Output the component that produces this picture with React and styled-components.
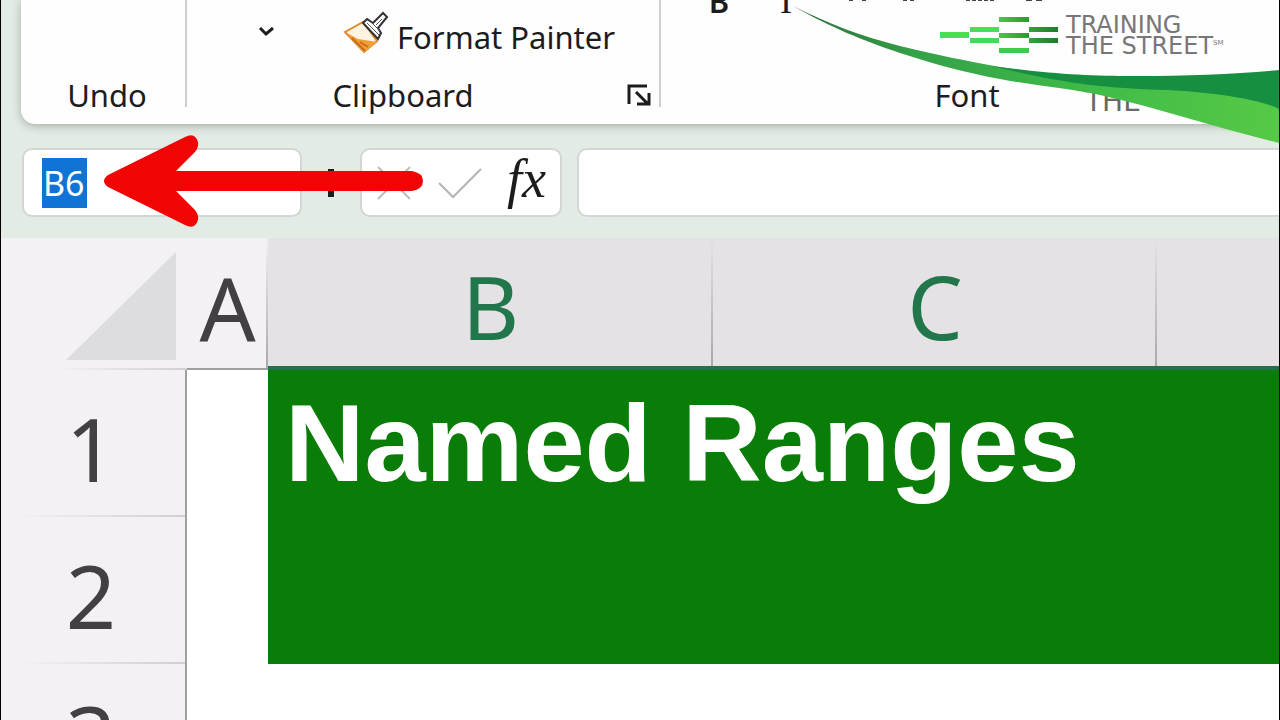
import styled, { createGlobalStyle } from "styled-components";
import { useState } from "react";


const GlobalStyle = createGlobalStyle`
  * {
    box-sizing: border-box;
  }
  body {
    margin: 0;
    font-family: "Noto Sans", "Open Sans", sans-serif;
    color: #1c1c1e;
  }
  button, input {
    font: inherit;
    color: inherit;
    border: 0;
    padding: 0;
    background: none;
  }
`

const Page = styled.div`
  position: relative;
  display: flex;
  flex-direction: column;
  height: 100vh;
  overflow: hidden;
  background: #e2ebe4;
  border-left: 1px solid #000;
  border-right: 1px solid #000;
`

/* ---- ribbon ---- */

const Ribbon = styled.header`
  display: flex;
  flex: none;
  height: 124px;
  margin-left: 20px;
  padding-bottom: 17px;
  background: #fefefe;
  border-radius: 0 0 0 14px;
  box-shadow: 0 2px 8px rgba(90, 100, 90, 0.45);
`

const Group = styled.section`
  display: flex;
  flex: none;
  flex-direction: column;
  width: ${(p) => p.$width}px;
  padding: 0 8px 0 ${(p) => p.$inset}px;
  border-right: ${(p) => (p.$last ? "0" : "2px solid #cfcfd1")};
`

const GroupFooter = styled.div`
  display: flex;
  align-items: center;
  gap: 16px;
  margin-top: auto;
`

const GroupLabel = styled.span`
  flex: 1;
  font-size: 31px;
  line-height: 24px;
  text-align: center;
`

const LauncherButton = styled.button`
  display: flex;
`

const ClipboardTools = styled.div`
  display: flex;
  align-items: center;
  gap: 69px;
  height: 24px;
  margin-top: 25px;
  padding-left: 64px;
`

const PainterButton = styled.button`
  display: flex;
  align-items: center;
  gap: 8px;
  font-size: 31px;
  line-height: 24px;
  white-space: nowrap;
`

const FontTools = styled.div`
  display: flex;
  align-items: flex-end;
  gap: 43px;
  height: 15px;
  padding-left: 38px;
  overflow: hidden;
`

const StyleButton = styled.button`
  width: 24px;
  font-family: ${(p) => (p.$serif ? '"Liberation Serif", serif' : "inherit")};
  font-size: ${(p) => (p.$serif ? 36 : 31)}px;
  font-weight: ${(p) => (p.$serif ? 400 : 600)};
  line-height: 28px;
`

/* ---- formula bar ---- */

const FormulaBar = styled.div`
  position: relative;
  display: flex;
  flex: none;
  padding: 24px 0 21px 21px;
`

const Field = styled.div`
  display: flex;
  align-items: center;
  flex: ${(p) => (p.$width ? `0 0 ${p.$width}px` : "1")};
  height: 69px;
  padding: 0 ${(p) => p.$pad}px;
  background: #fff;
  border: 2px solid #d3d6d4;
  border-right-width: ${(p) => (p.$width ? "2px" : "0")};
  border-radius: ${(p) => (p.$width ? "10px" : "10px 0 0 10px")};
`

const NameInput = styled.input`
  width: 45px;
  height: 50px;
  padding-left: 1px;
  background: #1073d6;
  color: #fff;
  font-size: 34px;
  outline: none;
`

const FormulaInput = styled.input`
  width: 100%;
  height: 48px;
  font-size: 34px;
  outline: none;
`

const Handle = styled.div`
  display: flex;
  justify-content: center;
  align-items: center;
  width: 58px;
`

const FormulaActions = styled(Field)`
  justify-content: space-between;
  margin-right: 15px;
`

const IconButton = styled.button`
  display: flex;
`

const FxButton = styled.button`
  padding-bottom: 8px;
  font-family: "Liberation Serif", serif;
  font-size: 54px;
  font-style: italic;
  line-height: 56px;
`

const Arrow = styled.svg`
  position: absolute;
  left: 102px;
  top: 10px;
`

/* ---- grid ---- */

const Sheet = styled.table`
  flex: none;
  width: 100%;
  table-layout: fixed;
  border-collapse: separate;
  border-spacing: 0;
  background: #fff;
`

const Corner = styled.th`
  width: 186px;
  height: 132px;
  padding: 4px 11px 0 0;
  background: linear-gradient(to right, transparent 30%, #d0cfd2) bottom / 100% 2px no-repeat, #f3f1f4;
  line-height: 0;
  text-align: right;
`

const ColumnHead = styled.th`
  width: ${(p) => (p.$width ? `${p.$width}px` : "auto")};
  padding: 8px 0 0;
  background:
    linear-gradient(to bottom, transparent, #a9a8ab) right / ${(p) => (p.$width ? "2px" : "0")} 100% no-repeat,
    ${(p) => (p.$selected ? "#e4e2e4" : "#f3f1f4")};
  border-bottom: ${(p) => (p.$selected ? "4px solid #23704a" : "2px solid #a09fa2")};
  color: ${(p) => (p.$selected ? "#21764b" : "#424045")};
  font-size: 88px;
  font-weight: 400;
  line-height: 88px;
`

const RowHead = styled.th`
  height: ${(p) => (p.$short ? 135 : 147)}px;
  padding: 8px 4px 0 0;
  background: linear-gradient(to right, transparent 10%, #cfced1) bottom / 100% 2px no-repeat, #f3f1f4;
  border-right: 2px solid #a09fa2;
  color: #424045;
  font-size: 88px;
  font-weight: 400;
  line-height: 88px;
`

const Cell = styled.td`
  padding: 0;
`

const TitleCell = styled.td`
  padding: 17px 0 0 17px;
  background: #0a7d08;
  color: #fff;
  font-family: "Liberation Sans", Arial, sans-serif;
  font-size: 110px;
  font-weight: 700;
  line-height: 112px;
  vertical-align: top;
  white-space: nowrap;
`

/* ---- brand corner ---- */

const Brand = styled.div`
  position: absolute;
  top: 0;
  right: 0;
  width: 492px;
  height: 145px;
`

const Wave = styled.svg`
  position: absolute;
  inset: 0;
`

const BrandRow = styled.div`
  position: relative;
  display: flex;
  gap: 7px;
  padding: 15px 0 0 153px;
`

const BrandName = styled.div`
  color: #77777a;
  font-family: "DejaVu Sans", sans-serif;
  font-size: 24px;
  line-height: 21px;
  white-space: nowrap;
`

const ServiceMark = styled.sup`
  font-size: 7px;
  line-height: 7px;
`

const BrandEcho = styled.span`
  position: absolute;
  left: 298px;
  top: 88px;
  color: #68686b;
  font-family: "DejaVu Sans", sans-serif;
  font-size: 28px;
  line-height: 28px;
`


function PainterIcon() {
  return (
    <svg width="46" height="52" viewBox="0 0 46 52" aria-hidden="true">
      <path d="M2 21 L20 11 L34 30 L21 41 Z" fill="#fff4e2" stroke="#e0892a" strokeWidth="2" />
      <path d="M4 22 L15 28 L34 31 L21 42 Z" fill="#ee9f3a" />
      <path d="M9 27 L22 40 M17 31 L25 36" stroke="#c96d17" strokeWidth="2" />
      <path d="M20 12 L24 8 L30 12 L40 2 L44 6 L35 17 L38 22 L35 28 Z" fill="#fff" stroke="#303036" strokeWidth="2" />
      <path d="M24 12 L36 24 M28 11 L37 20 M33 14 L39 8" stroke="#55555c" strokeWidth="1" />
    </svg>
  )
}

function BrandWave() {
  return (
    <Wave width="492" height="145" viewBox="0 0 492 145" aria-hidden="true">
      <defs>
        <linearGradient id="wave" x1="0" x2="1">
          <stop offset="0" stopColor="#2b6b3a" />
          <stop offset="0.25" stopColor="#34a147" />
          <stop offset="0.65" stopColor="#42bd48" />
          <stop offset="1" stopColor="#56c946" />
        </linearGradient>
      </defs>
      <path d="M6 6 C40 24 73 38 113 49 C150 59 180 65 213 71 C270 80 330 84 380 84 L492 84 V0 H6 Z" fill="#fefefe" />
      <path
        d="M6 6 C40 23 73 36 113 46 C150 55 180 61 213 67 C290 80 420 80 492 100 V143 C430 128 375 109 313 95 C285 89 250 86 213 79 C180 73 150 65 113 53 C75 40 45 28 6 6 Z"
        fill="url(#wave)"
      />
      <path d="M205 66 C266 74 300 76 350 76 C400 76 450 74 492 70 V109 C470 98 420 92 380 90 C310 88 270 82 205 66 Z" fill="#178f40" />
      <path d="M62 0 h4 M75 0 h5 M116 0 h4 M123 0 h5 M179 0 h30" stroke="#444" strokeWidth="2" strokeDasharray="4 2" />
      <path d="M239 0 h6 M249 0 h6" stroke="#444" strokeWidth="2" />
    </Wave>
  )
}

function BrandBars() {
  return (
    <svg width="119" height="42" viewBox="0 0 119 42" aria-hidden="true">
      <defs>
        <linearGradient id="midBar" x1="0" x2="1">
          <stop offset="0" stopColor="#43c84e" />
          <stop offset="1" stopColor="#279a31" />
        </linearGradient>
        <linearGradient id="darkBar" x1="0" x2="1">
          <stop offset="0" stopColor="#31a53a" />
          <stop offset="1" stopColor="#1f7a2a" />
        </linearGradient>
      </defs>
      <rect x="0" y="17" width="29" height="6" fill="#47df5a" />
      <rect x="30" y="12" width="29" height="5" fill="#47df5a" />
      <rect x="30" y="23" width="29" height="5" fill="#45d956" />
      <rect x="59" y="2" width="30" height="5" fill="url(#midBar)" />
      <rect x="59" y="18" width="30" height="5" fill="url(#midBar)" />
      <rect x="59" y="33" width="30" height="5" fill="#40cb4d" />
      <rect x="89" y="12" width="29" height="5" fill="url(#darkBar)" />
      <rect x="89" y="23" width="29" height="5" fill="url(#darkBar)" />
    </svg>
  )
}

function App() {
  const [cellName, setCellName] = useState("B6");
  const [formula, setFormula] = useState("");

  return (
    <Page>
      <GlobalStyle />
      <Ribbon>
        <Group $width={166} $inset={16}>
          <GroupFooter>
            <GroupLabel>Undo</GroupLabel>
          </GroupFooter>
        </Group>
        <Group $width={474} $inset={8}>
          <ClipboardTools>
            <IconButton aria-label="Copy options">
              <svg width="15" height="20" viewBox="0 0 15 20">
                <path d="M1 1 L7 7 L14 1" fill="none" stroke="#1c1c1e" strokeWidth="3" />
              </svg>
            </IconButton>
            <PainterButton>
              <PainterIcon />
              Format Painter
            </PainterButton>
          </ClipboardTools>
          <GroupFooter>
            <GroupLabel>Clipboard</GroupLabel>
            <LauncherButton aria-label="Clipboard settings">
              <svg width="24" height="22" viewBox="0 0 24 22">
                <path d="M2 20 V2 H20 M9 8 L20 19 M22 9 V20 H10" fill="none" stroke="#1c1c1e" strokeWidth="3" />
              </svg>
            </LauncherButton>
          </GroupFooter>
        </Group>
        <Group $width={612} $inset={8} $last>
          <FontTools>
            <StyleButton aria-label="Bold">B</StyleButton>
            <StyleButton aria-label="Italic" $serif>I</StyleButton>
          </FontTools>
          <GroupFooter>
            <GroupLabel>Font</GroupLabel>
          </GroupFooter>
        </Group>
      </Ribbon>

      <FormulaBar>
        <Field $width={280} $pad={18}>
          <NameInput aria-label="Name box" value={cellName} onChange={(e) => setCellName(e.target.value)} />
        </Field>
        <Handle>
          <svg width="6" height="28" viewBox="0 0 6 28" aria-hidden="true">
            <path d="M0 0 h6 v6 h-6 Z M0 11 h6 v6 h-6 Z M0 22 h6 v6 h-6 Z" fill="#1c1c1e" />
          </svg>
        </Handle>
        <FormulaActions $width={202} $pad={14}>
          <IconButton aria-label="Cancel">
            <svg width="36" height="36" viewBox="0 0 36 36">
              <path d="M2 2 L34 34 M34 2 L2 34" stroke="#bdbdbd" strokeWidth="2" />
            </svg>
          </IconButton>
          <IconButton aria-label="Enter">
            <svg width="46" height="32" viewBox="0 0 46 32">
              <path d="M2 16 L16 30 L44 2" fill="none" stroke="#b4b4b6" strokeWidth="2" />
            </svg>
          </IconButton>
          <FxButton aria-label="Insert function">fx</FxButton>
        </FormulaActions>
        <Field $pad={12}>
          <FormulaInput aria-label="Formula" value={formula} onChange={(e) => setFormula(e.target.value)} />
        </Field>
        <Arrow width="322" height="94" viewBox="0 0 322 94" aria-hidden="true">
          <path
            d="M5 41 L82 3 Q92 -2 95 8 Q96 14 91 19 L73 37 H309 Q320 39 320 47 Q320 55 309 57 H73 L91 75 Q96 80 95 86 Q92 96 82 91 L5 53 Q-3 47 5 41 Z"
            fill="#f00404"
          />
        </Arrow>
      </FormulaBar>

      <Sheet>
        <thead>
          <tr>
            <Corner aria-label="Select all">
              <svg width="110" height="108" viewBox="0 0 110 108">
                <path d="M110 0 V108 H0 Z" fill="#dddce0" />
              </svg>
            </Corner>
            <ColumnHead $width={81}>A</ColumnHead>
            <ColumnHead $width={445} $selected>B</ColumnHead>
            <ColumnHead $width={444} $selected>C</ColumnHead>
            <ColumnHead $selected />
          </tr>
        </thead>
        <tbody>
          <tr>
            <RowHead>1</RowHead>
            <Cell />
            <TitleCell colSpan={3} rowSpan={2}>Named Ranges</TitleCell>
          </tr>
          <tr>
            <RowHead>2</RowHead>
            <Cell />
          </tr>
          <tr>
            <RowHead $short>3</RowHead>
            <Cell colSpan={4} />
          </tr>
        </tbody>
      </Sheet>

      <Brand>
        <BrandEcho aria-hidden="true">THE</BrandEcho>
        <BrandWave />
        <BrandRow>
          <BrandBars />
          <BrandName>
            TRAINING
            <br />
            THE STREET<ServiceMark>SM</ServiceMark>
          </BrandName>
        </BrandRow>
      </Brand>
    </Page>
  )
}

export default App
